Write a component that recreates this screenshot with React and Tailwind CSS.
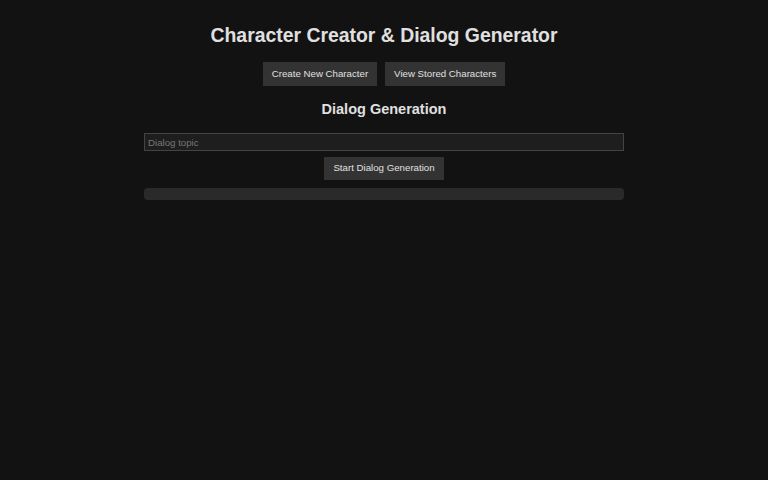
export default function App() {
  return (
    <div className="min-h-screen bg-[#121212] text-[#e0e0e0] font-['Liberation_Sans',Arial,sans-serif]">
      <div className="w-[480px] mx-auto pt-[23px] flex flex-col items-center">
        <h1 className="text-[19.4px] font-bold leading-[24px]">Character Creator &amp; Dialog Generator</h1>

        <div className="flex gap-2 mt-[15px]">
          <button className="h-6 px-[9px] bg-[#333] text-[9.7px] text-[#e0e0e0]">Create New Character</button>
          <button className="h-6 px-[9px] bg-[#333] text-[9.7px] text-[#e0e0e0]">View Stored Characters</button>
        </div>

        <h2 className="text-[14.5px] font-bold leading-[18px] mt-[14px]">Dialog Generation</h2>

        <input
          type="text"
          placeholder="Dialog topic"
          className="w-full h-[18px] mt-[15px] px-[3px] bg-[#1e1e1e] border border-[#444] text-[9.7px] text-[#e0e0e0] placeholder:text-[#777] outline-none"
        />

        <button className="h-[23px] px-[9px] mt-[6px] bg-[#333] text-[9.7px] text-[#e0e0e0]">Start Dialog Generation</button>

        <div className="w-full h-3 mt-2 rounded bg-[#2a2a2a]"></div>
      </div>
    </div>
  );
}
